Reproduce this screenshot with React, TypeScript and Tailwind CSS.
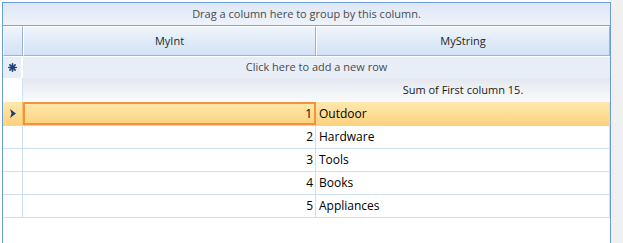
import React from "react";

const rows = [
  { n: 1, s: "Outdoor" },
  { n: 2, s: "Hardware" },
  { n: 3, s: "Tools" },
  { n: 4, s: "Books" },
  { n: 5, s: "Appliances" },
];

export default function App() {
  return (
    <div
      className="w-[623px] h-[243px] bg-white flex overflow-hidden text-[12px] text-black"
      style={{ fontFamily: '"Open Sans", "Noto Sans", sans-serif' }}
    >
      <div className="pl-[2px] pt-[2px] w-[611px] h-full">
        <div className="w-[609px] h-full border border-b-0 border-[#6c9bd8] flex flex-col bg-white">
          {/* group panel */}
          <div className="h-[23px] flex items-center justify-center border-b border-[#7ca3d8] bg-gradient-to-b from-[#dde7f5] to-[#eef3fb] text-[11px] text-[#4a4a4a]">
            Drag a column here to group by this column.
          </div>
          {/* header */}
          <div className="h-[30px] flex">
            <div className="w-[20px] border-t border-l border-white border-r-[#9eb3cd] border-r border-b border-b-[#9eb3cd] bg-gradient-to-b from-[#eef4fc] to-[#d3e2f6]" />
            <div className="w-[293px] flex items-center justify-center pt-[1px] border-t border-l border-white border-r border-r-[#9eb3cd] border-b border-b-[#9eb3cd] bg-gradient-to-b from-[#eef4fc] to-[#d3e2f6] text-[11px] text-[#1f1f1f]">
              MyInt
            </div>
            <div className="flex-1 flex items-center justify-center pt-[1px] border-t border-l border-white border-r border-r-[#9eb3cd] border-b border-b-[#9eb3cd] bg-gradient-to-b from-[#eef4fc] to-[#d3e2f6] text-[11px] text-[#1f1f1f]">
              MyString
            </div>
          </div>
          {/* new row */}
          <div className="h-[22px] flex bg-[#e8eef8] border-t border-white">
            <div className="w-[20px] flex items-center justify-center border-r-2 border-white">
              <svg width="9" height="9" viewBox="0 0 9 9">
                <g stroke="#1d3f78" strokeWidth="1.6" strokeLinecap="round">
                  <line x1="4.5" y1="0.8" x2="4.5" y2="8.2" />
                  <line x1="0.8" y1="4.5" x2="8.2" y2="4.5" />
                  <line x1="1.9" y1="1.9" x2="7.1" y2="7.1" />
                  <line x1="7.1" y1="1.9" x2="1.9" y2="7.1" />
                </g>
              </svg>
            </div>
            <div className="flex-1 flex items-center justify-center text-[11px] text-[#4a4a4a]">
              Click here to add a new row
            </div>
          </div>
          {/* summary row */}
          <div className="h-[24px] flex">
            <div className="w-[20px] bg-white border-r border-[#d4e1f3]" />
            <div className="w-[293px] bg-gradient-to-b from-[#e3e7ee] to-[#fbfbfc]" />
            <div className="flex-1 flex items-center justify-center bg-gradient-to-b from-[#e3e7ee] to-[#fbfbfc] text-[11px] text-[#1a1a1a]">
              Sum of First column 15.
            </div>
          </div>
          {/* data rows */}
          {rows.map((r, i) => {
            const sel = i === 0;
            return (
              <div
                key={r.n}
                className={
                  "flex border-b " +
                  (sel
                    ? "h-[24px] border-[#f7d47e] bg-gradient-to-b from-[#fee9ad] to-[#fdd27f]"
                    : "h-[23px] border-[#cddff4] bg-white")
                }
              >
                <div
                  className={
                    "w-[20px] flex items-center justify-center border-r " +
                    (sel ? "border-[#f1c36a]" : "border-[#cddff4]")
                  }
                >
                  {sel && (
                    <svg width="8" height="9" viewBox="0 0 8 9">
                      <path d="M1 0 L7 4.5 L1 9 L2.5 4.5 Z" fill="#1d3f78" />
                    </svg>
                  )}
                </div>
                <div
                  className={
                    "w-[293px] flex items-center justify-end pr-[2px] " +
                    (sel ? "border-2 border-[#f7913c]" : "border-r border-[#cddff4]")
                  }
                >
                  {r.n}
                </div>
                <div className="flex-1 flex items-center pl-[3px] border-r border-[#cddff4]">
                  {r.s}
                </div>
              </div>
            );
          })}
        </div>
      </div>
      <div className="flex-1 bg-[#f0f0f0]" />
    </div>
  );
}
